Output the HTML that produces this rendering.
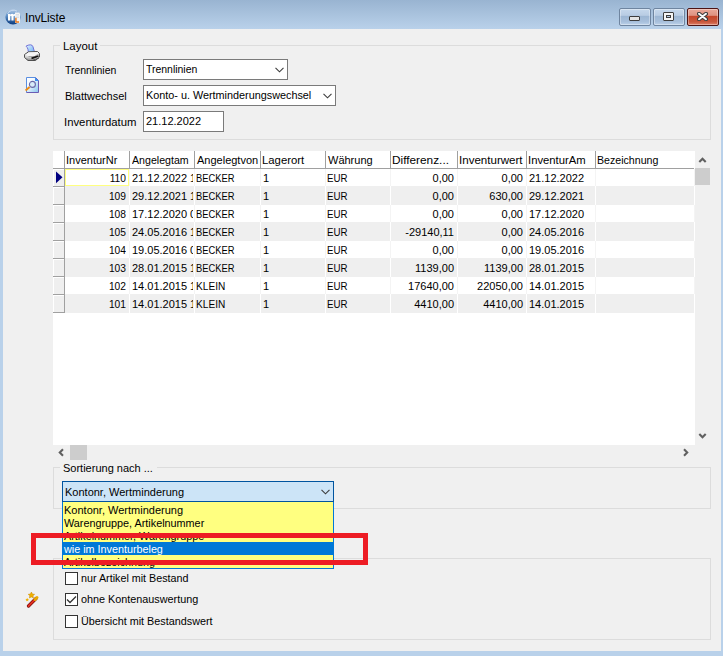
<!DOCTYPE html>
<html><head><meta charset="utf-8"><title>InvListe</title>
<style>
html,body{margin:0;padding:0;}
body{width:723px;height:656px;position:relative;overflow:hidden;background:#b9d1ea;font-family:'Liberation Sans',sans-serif;}
.r{position:absolute;}
.t{position:absolute;white-space:nowrap;font-size:11px;line-height:13px;color:#000;}
</style></head><body>
<div class="r" style="left:0;top:0;width:723px;height:29px;background:linear-gradient(#99b4d1,#b9d1ea);"></div>
<div class="r" style="left:0;top:29px;width:723px;height:627px;background:#b9d1ea;"></div>
<div class="r" style="left:3px;top:29px;width:718px;height:622px;background:#f0f0f0;"></div>
<svg class="r" style="left:5px;top:9px" width="16" height="16" viewBox="0 0 16 16">
<defs><linearGradient id="ag" x1="0" y1="0" x2="0" y2="1"><stop offset="0" stop-color="#b4cce8"/><stop offset="0.45" stop-color="#5a8cc4"/><stop offset="1" stop-color="#08397d"/></linearGradient></defs>
<circle cx="8" cy="8" r="7.6" fill="url(#ag)"/>
<path d="M2.5 5 A6.5 6.5 0 0 1 12 2.2" stroke="#d6e4f4" stroke-width="0.9" fill="none" opacity="0.8"/>
<path transform="translate(0,-0.8) scale(1,1.1)" d="M3 11.2V5.2h2.3v0.7C5.9 5.3 6.5 5 7.1 5c0.7 0 1.2 0.3 1.5 0.8C9.1 5.3 9.7 5 10.3 5 11.4 5 12 5.8 12 7v4.2H9.8V7.6c0-0.5-0.2-0.7-0.6-0.7S8.6 7.1 8.6 7.6v3.6H6.4V7.6c0-0.5-0.2-0.7-0.6-0.7S5.3 7.1 5.3 7.6v3.6z" fill="#fff"/>
<path d="M10 3.5h4l1 1v9.5h-5z" fill="#f4f4f4"/>
<path d="M10.8 5.5h3.2M10.8 7h3.2M10.8 8.5h3.2" stroke="#c8d0dc" stroke-width="0.6"/>
<path d="M10.9 8.8v4.2h3.2" stroke="#e8761a" stroke-width="1.4" fill="none"/>
</svg>
<div class="t" style="left:25px;top:12px;font-size:12px;color:#000;letter-spacing:-0.15px;">InvListe</div>
<div class="r" style="left:619px;top:8px;width:30px;height:16px;border:1px solid #6f85a0;border-radius:2px;background:linear-gradient(#c6d8ec 0%,#b8cce3 40%,#9cb6d3 44%,#a8c0dc 80%,#bdd2ea 100%);box-shadow:inset 0 0 0 1px rgba(255,255,255,0.35);"></div>
<div class="r" style="left:653px;top:8px;width:30px;height:16px;border:1px solid #6f85a0;border-radius:2px;background:linear-gradient(#c6d8ec 0%,#b8cce3 40%,#9cb6d3 44%,#a8c0dc 80%,#bdd2ea 100%);box-shadow:inset 0 0 0 1px rgba(255,255,255,0.35);"></div>
<div class="r" style="left:687px;top:8px;width:30px;height:16px;border:1px solid #4d1515;border-radius:2px;background:linear-gradient(#e9a899 0%,#de9281 40%,#c4452a 44%,#c8583d 80%,#df8068 100%);box-shadow:inset 0 0 0 1px rgba(255,255,255,0.35);"></div>
<div class="r" style="left:629px;top:16px;width:9px;height:3px;border:1px solid #3d3d3d;border-radius:1px;background:#e4e4e4;"></div>
<div class="r" style="left:663px;top:12px;width:9px;height:7px;border:1px solid #3d3d3d;border-radius:1px;background:#f4f4f4;"></div>
<div class="r" style="left:666px;top:15px;width:3px;height:1px;border:1px solid #3d3d3d;background:#b7cce3;"></div>
<svg class="r" style="left:697px;top:12px" width="11" height="9" viewBox="0 0 11 9">
<path d="M2 1.8 L9 7.2 M9 1.8 L2 7.2" stroke="#3b3b3b" stroke-width="4" stroke-linecap="round"/>
<path d="M2 1.8 L9 7.2 M9 1.8 L2 7.2" stroke="#fafafa" stroke-width="2" stroke-linecap="round"/>
</svg>
<svg class="r" style="left:23px;top:44px" width="18" height="18" viewBox="0 0 18 18">
<defs><linearGradient id="pg" x1="0" y1="0" x2="1" y2="1"><stop offset="0" stop-color="#e6f4ff"/><stop offset="1" stop-color="#5eaaf2"/></linearGradient>
<linearGradient id="bg1" x1="0" y1="0" x2="0" y2="1"><stop offset="0" stop-color="#ffffff"/><stop offset="0.6" stop-color="#d4d4d4"/><stop offset="1" stop-color="#8a8a8a"/></linearGradient></defs>
<path d="M3 2.2 Q5 0.8 7.5 0.8 Q9.5 1 10 2.8 L11.8 9 L5.5 9.5 L5 5.5 Q4.5 3.2 3 2.2z" fill="url(#pg)" stroke="#7272d8" stroke-width="1"/>
<path d="M1.5 10.5 L5.5 7.8 L14.5 7.5 L16.5 9.5 L16.5 13 L12.5 16.5 L5 16.5 L1.5 13.5z" fill="url(#bg1)" stroke="#505050" stroke-width="1"/>
<path d="M2.5 10.8 L6 8.6 L14 8.4 L15.5 9.6 L11.5 12 L5 12z" fill="#f4f4f4"/>
<path d="M5.5 12.5 L11.5 12.5 L15.8 10" stroke="#9a9a9a" stroke-width="0.8" fill="none"/>
<path d="M8.5 14.3 L15.5 12" stroke="#111" stroke-width="1.8"/>
<path d="M10 16.2 L16 14" stroke="#444" stroke-width="0.8"/>
</svg>
<svg class="r" style="left:24px;top:76px" width="16" height="17" viewBox="0 0 16 17">
<defs><linearGradient id="dg" x1="0" y1="0" x2="1" y2="1"><stop offset="0" stop-color="#ffffff"/><stop offset="0.35" stop-color="#f4faff"/><stop offset="1" stop-color="#86c4ee"/></linearGradient></defs>
<path d="M2.5 1.5h9l3 3v12h-12z" fill="url(#dg)"/>
<path d="M2.5 16.5V1.5h9" stroke="#5a8ee0" stroke-width="1" fill="none"/>
<path d="M11.5 1.5l3 3v12h-12" stroke="#6a5cb4" stroke-width="1" fill="none"/>
<path d="M11 1.2v3.8h3.8z" fill="#3a8ef0"/>
<circle cx="8.4" cy="8.4" r="3" fill="#d8ebf8" stroke="#6a68a8" stroke-width="1.1"/>
<path d="M1.6 14.6l4-3.6" stroke="#f08c12" stroke-width="2"/>
</svg>
<svg class="r" style="left:24px;top:590px" width="16" height="18" viewBox="0 0 16 18">
<path d="M7.4 2l1 2 2.2.3-1.6 1.5.4 2.2-2-1.1-2 1.1.4-2.2L4.2 4.3l2.2-.3z" fill="#f0b000" stroke="#c88a00" stroke-width="0.5"/>
<path d="M3.2 8l.6 1.1 1.2.2-.9.8.2 1.2-1.1-.6-1.1.6.2-1.2-.9-.8 1.2-.2z" fill="#f0b000"/>
<path d="M4.5 16 L12 8.5" stroke="#7a0a0a" stroke-width="3.2" stroke-linecap="round"/>
<path d="M4.5 16 L12 8.5" stroke="#e03020" stroke-width="1.8" stroke-linecap="round"/>
<path d="M11 9.5 L13 7.5" stroke="#e8a800" stroke-width="3" stroke-linecap="round"/>
</svg>
<div class="r" style="left:53px;top:45px;width:658px;height:95px;border:1px solid #dcdcdc;box-sizing:border-box;"></div>
<div class="r" style="left:60px;top:43px;width:40px;height:5px;background:#f0f0f0;"></div>
<div class="t" style="left:63px;top:40px;font-size:11px;color:#000;transform:scaleX(1.04);transform-origin:0 0;">Layout</div>
<div class="t" style="left:65px;top:64px;font-size:11px;color:#000;transform:scaleX(0.95);transform-origin:0 0;">Trennlinien</div>
<div class="t" style="left:65px;top:90px;font-size:11px;color:#000;">Blattwechsel</div>
<div class="t" style="left:64px;top:116px;font-size:11px;color:#000;transform:scaleX(1.03);transform-origin:0 0;">Inventurdatum</div>
<div class="r" style="left:143px;top:59px;width:145px;height:21px;border:1px solid #7a7a7a;background:#fff;box-sizing:border-box;"></div>
<div class="t" style="left:146px;top:63px;font-size:11px;color:#000;transform:scaleX(0.95);transform-origin:0 0;">Trennlinien</div>
<svg class="r" style="left:275px;top:67px" width="9" height="6" viewBox="0 0 9 6"><path d="M0.5 0.8 L4.5 4.8 L8.5 0.8" stroke="#3c3c3c" stroke-width="1.1" fill="none"/></svg>
<div class="r" style="left:143px;top:85px;width:193px;height:21px;border:1px solid #7a7a7a;background:#fff;box-sizing:border-box;"></div>
<div class="t" style="left:146px;top:89px;font-size:11px;color:#000;transform:scaleX(0.984);transform-origin:0 0;">Konto- u. Wertminderungswechsel</div>
<svg class="r" style="left:323px;top:93px" width="9" height="6" viewBox="0 0 9 6"><path d="M0.5 0.8 L4.5 4.8 L8.5 0.8" stroke="#3c3c3c" stroke-width="1.1" fill="none"/></svg>
<div class="r" style="left:143px;top:111px;width:81px;height:21px;border:1px solid #7a7a7a;background:#fff;box-sizing:border-box;"></div>
<div class="t" style="left:146px;top:115px;font-size:11px;color:#000;">21.12.2022</div>
<div class="r" style="left:53px;top:151px;width:642px;height:294px;background:#fff;"></div>
<div class="r" style="left:695px;top:151px;width:16px;height:309px;background:#f0f0f0;"></div>
<div class="r" style="left:53px;top:445px;width:658px;height:15px;background:#f0f0f0;"></div>
<div class="r" style="left:65px;top:186px;width:629px;height:1px;background:#efefef;"></div>
<div class="r" style="left:53px;top:169px;width:11px;height:17px;background:#efefef;border-left:1px solid #fff;border-top:1px solid #fff;box-sizing:border-box;"></div>
<div class="r" style="left:53px;top:186px;width:11px;height:1px;background:#a0a0a0;"></div>
<div class="r" style="left:65px;top:186px;width:629px;height:19px;background:#efefef;"></div>
<div class="r" style="left:53px;top:187px;width:11px;height:17px;background:#efefef;border-left:1px solid #fff;border-top:1px solid #fff;box-sizing:border-box;"></div>
<div class="r" style="left:53px;top:204px;width:11px;height:1px;background:#a0a0a0;"></div>
<div class="r" style="left:65px;top:222px;width:629px;height:1px;background:#efefef;"></div>
<div class="r" style="left:53px;top:205px;width:11px;height:17px;background:#efefef;border-left:1px solid #fff;border-top:1px solid #fff;box-sizing:border-box;"></div>
<div class="r" style="left:53px;top:222px;width:11px;height:1px;background:#a0a0a0;"></div>
<div class="r" style="left:65px;top:222px;width:629px;height:19px;background:#efefef;"></div>
<div class="r" style="left:53px;top:223px;width:11px;height:17px;background:#efefef;border-left:1px solid #fff;border-top:1px solid #fff;box-sizing:border-box;"></div>
<div class="r" style="left:53px;top:240px;width:11px;height:1px;background:#a0a0a0;"></div>
<div class="r" style="left:65px;top:258px;width:629px;height:1px;background:#efefef;"></div>
<div class="r" style="left:53px;top:241px;width:11px;height:17px;background:#efefef;border-left:1px solid #fff;border-top:1px solid #fff;box-sizing:border-box;"></div>
<div class="r" style="left:53px;top:258px;width:11px;height:1px;background:#a0a0a0;"></div>
<div class="r" style="left:65px;top:258px;width:629px;height:19px;background:#efefef;"></div>
<div class="r" style="left:53px;top:259px;width:11px;height:17px;background:#efefef;border-left:1px solid #fff;border-top:1px solid #fff;box-sizing:border-box;"></div>
<div class="r" style="left:53px;top:276px;width:11px;height:1px;background:#a0a0a0;"></div>
<div class="r" style="left:65px;top:294px;width:629px;height:1px;background:#efefef;"></div>
<div class="r" style="left:53px;top:277px;width:11px;height:17px;background:#efefef;border-left:1px solid #fff;border-top:1px solid #fff;box-sizing:border-box;"></div>
<div class="r" style="left:53px;top:294px;width:11px;height:1px;background:#a0a0a0;"></div>
<div class="r" style="left:65px;top:294px;width:629px;height:19px;background:#efefef;"></div>
<div class="r" style="left:53px;top:295px;width:11px;height:17px;background:#efefef;border-left:1px solid #fff;border-top:1px solid #fff;box-sizing:border-box;"></div>
<div class="r" style="left:53px;top:312px;width:11px;height:1px;background:#a0a0a0;"></div>
<div class="r" style="left:129px;top:169px;width:1px;height:17px;background:#f4f4f4;"></div>
<div class="r" style="left:194px;top:169px;width:1px;height:17px;background:#f4f4f4;"></div>
<div class="r" style="left:260px;top:169px;width:1px;height:17px;background:#f4f4f4;"></div>
<div class="r" style="left:325px;top:169px;width:1px;height:17px;background:#f4f4f4;"></div>
<div class="r" style="left:390px;top:169px;width:1px;height:17px;background:#f4f4f4;"></div>
<div class="r" style="left:457px;top:169px;width:1px;height:17px;background:#f4f4f4;"></div>
<div class="r" style="left:526px;top:169px;width:1px;height:17px;background:#f4f4f4;"></div>
<div class="r" style="left:595px;top:169px;width:1px;height:17px;background:#f4f4f4;"></div>
<div class="r" style="left:694px;top:169px;width:1px;height:17px;background:#f4f4f4;"></div>
<div class="r" style="left:129px;top:186px;width:1px;height:19px;background:#ffffff;"></div>
<div class="r" style="left:194px;top:186px;width:1px;height:19px;background:#ffffff;"></div>
<div class="r" style="left:260px;top:186px;width:1px;height:19px;background:#ffffff;"></div>
<div class="r" style="left:325px;top:186px;width:1px;height:19px;background:#ffffff;"></div>
<div class="r" style="left:390px;top:186px;width:1px;height:19px;background:#ffffff;"></div>
<div class="r" style="left:457px;top:186px;width:1px;height:19px;background:#ffffff;"></div>
<div class="r" style="left:526px;top:186px;width:1px;height:19px;background:#ffffff;"></div>
<div class="r" style="left:595px;top:186px;width:1px;height:19px;background:#ffffff;"></div>
<div class="r" style="left:694px;top:186px;width:1px;height:19px;background:#ffffff;"></div>
<div class="r" style="left:129px;top:205px;width:1px;height:17px;background:#f4f4f4;"></div>
<div class="r" style="left:194px;top:205px;width:1px;height:17px;background:#f4f4f4;"></div>
<div class="r" style="left:260px;top:205px;width:1px;height:17px;background:#f4f4f4;"></div>
<div class="r" style="left:325px;top:205px;width:1px;height:17px;background:#f4f4f4;"></div>
<div class="r" style="left:390px;top:205px;width:1px;height:17px;background:#f4f4f4;"></div>
<div class="r" style="left:457px;top:205px;width:1px;height:17px;background:#f4f4f4;"></div>
<div class="r" style="left:526px;top:205px;width:1px;height:17px;background:#f4f4f4;"></div>
<div class="r" style="left:595px;top:205px;width:1px;height:17px;background:#f4f4f4;"></div>
<div class="r" style="left:694px;top:205px;width:1px;height:17px;background:#f4f4f4;"></div>
<div class="r" style="left:129px;top:222px;width:1px;height:19px;background:#ffffff;"></div>
<div class="r" style="left:194px;top:222px;width:1px;height:19px;background:#ffffff;"></div>
<div class="r" style="left:260px;top:222px;width:1px;height:19px;background:#ffffff;"></div>
<div class="r" style="left:325px;top:222px;width:1px;height:19px;background:#ffffff;"></div>
<div class="r" style="left:390px;top:222px;width:1px;height:19px;background:#ffffff;"></div>
<div class="r" style="left:457px;top:222px;width:1px;height:19px;background:#ffffff;"></div>
<div class="r" style="left:526px;top:222px;width:1px;height:19px;background:#ffffff;"></div>
<div class="r" style="left:595px;top:222px;width:1px;height:19px;background:#ffffff;"></div>
<div class="r" style="left:694px;top:222px;width:1px;height:19px;background:#ffffff;"></div>
<div class="r" style="left:129px;top:241px;width:1px;height:17px;background:#f4f4f4;"></div>
<div class="r" style="left:194px;top:241px;width:1px;height:17px;background:#f4f4f4;"></div>
<div class="r" style="left:260px;top:241px;width:1px;height:17px;background:#f4f4f4;"></div>
<div class="r" style="left:325px;top:241px;width:1px;height:17px;background:#f4f4f4;"></div>
<div class="r" style="left:390px;top:241px;width:1px;height:17px;background:#f4f4f4;"></div>
<div class="r" style="left:457px;top:241px;width:1px;height:17px;background:#f4f4f4;"></div>
<div class="r" style="left:526px;top:241px;width:1px;height:17px;background:#f4f4f4;"></div>
<div class="r" style="left:595px;top:241px;width:1px;height:17px;background:#f4f4f4;"></div>
<div class="r" style="left:694px;top:241px;width:1px;height:17px;background:#f4f4f4;"></div>
<div class="r" style="left:129px;top:258px;width:1px;height:19px;background:#ffffff;"></div>
<div class="r" style="left:194px;top:258px;width:1px;height:19px;background:#ffffff;"></div>
<div class="r" style="left:260px;top:258px;width:1px;height:19px;background:#ffffff;"></div>
<div class="r" style="left:325px;top:258px;width:1px;height:19px;background:#ffffff;"></div>
<div class="r" style="left:390px;top:258px;width:1px;height:19px;background:#ffffff;"></div>
<div class="r" style="left:457px;top:258px;width:1px;height:19px;background:#ffffff;"></div>
<div class="r" style="left:526px;top:258px;width:1px;height:19px;background:#ffffff;"></div>
<div class="r" style="left:595px;top:258px;width:1px;height:19px;background:#ffffff;"></div>
<div class="r" style="left:694px;top:258px;width:1px;height:19px;background:#ffffff;"></div>
<div class="r" style="left:129px;top:277px;width:1px;height:17px;background:#f4f4f4;"></div>
<div class="r" style="left:194px;top:277px;width:1px;height:17px;background:#f4f4f4;"></div>
<div class="r" style="left:260px;top:277px;width:1px;height:17px;background:#f4f4f4;"></div>
<div class="r" style="left:325px;top:277px;width:1px;height:17px;background:#f4f4f4;"></div>
<div class="r" style="left:390px;top:277px;width:1px;height:17px;background:#f4f4f4;"></div>
<div class="r" style="left:457px;top:277px;width:1px;height:17px;background:#f4f4f4;"></div>
<div class="r" style="left:526px;top:277px;width:1px;height:17px;background:#f4f4f4;"></div>
<div class="r" style="left:595px;top:277px;width:1px;height:17px;background:#f4f4f4;"></div>
<div class="r" style="left:694px;top:277px;width:1px;height:17px;background:#f4f4f4;"></div>
<div class="r" style="left:129px;top:294px;width:1px;height:19px;background:#ffffff;"></div>
<div class="r" style="left:194px;top:294px;width:1px;height:19px;background:#ffffff;"></div>
<div class="r" style="left:260px;top:294px;width:1px;height:19px;background:#ffffff;"></div>
<div class="r" style="left:325px;top:294px;width:1px;height:19px;background:#ffffff;"></div>
<div class="r" style="left:390px;top:294px;width:1px;height:19px;background:#ffffff;"></div>
<div class="r" style="left:457px;top:294px;width:1px;height:19px;background:#ffffff;"></div>
<div class="r" style="left:526px;top:294px;width:1px;height:19px;background:#ffffff;"></div>
<div class="r" style="left:595px;top:294px;width:1px;height:19px;background:#ffffff;"></div>
<div class="r" style="left:694px;top:294px;width:1px;height:19px;background:#ffffff;"></div>
<div class="r" style="left:53px;top:168px;width:641px;height:1px;background:#a0a0a0;"></div>
<div class="r" style="left:64px;top:151px;width:1px;height:162px;background:#a0a0a0;"></div>
<div class="r" style="left:129px;top:151px;width:1px;height:17px;background:#a0a0a0;"></div>
<div class="r" style="left:194px;top:151px;width:1px;height:17px;background:#a0a0a0;"></div>
<div class="r" style="left:260px;top:151px;width:1px;height:17px;background:#a0a0a0;"></div>
<div class="r" style="left:325px;top:151px;width:1px;height:17px;background:#a0a0a0;"></div>
<div class="r" style="left:390px;top:151px;width:1px;height:17px;background:#a0a0a0;"></div>
<div class="r" style="left:457px;top:151px;width:1px;height:17px;background:#a0a0a0;"></div>
<div class="r" style="left:526px;top:151px;width:1px;height:17px;background:#a0a0a0;"></div>
<div class="r" style="left:595px;top:151px;width:1px;height:17px;background:#a0a0a0;"></div>
<div class="t" style="left:66px;top:154px;font-size:11px;color:#000;">InventurNr</div>
<div class="t" style="left:132px;top:154px;font-size:11px;color:#000;transform:scaleX(0.965);transform-origin:0 0;">Angelegtam</div>
<div class="t" style="left:197px;top:154px;font-size:11px;color:#000;">Angelegtvon</div>
<div class="t" style="left:262px;top:154px;font-size:11px;color:#000;transform:scaleX(1.03);transform-origin:0 0;">Lagerort</div>
<div class="t" style="left:328px;top:154px;font-size:11px;color:#000;">Währung</div>
<div class="t" style="left:392px;top:154px;font-size:11px;color:#000;transform:scaleX(1.075);transform-origin:0 0;">Differenz...</div>
<div class="t" style="left:459px;top:154px;font-size:11px;color:#000;transform:scaleX(1.05);transform-origin:0 0;">Inventurwert</div>
<div class="t" style="left:528px;top:154px;font-size:11px;color:#000;transform:scaleX(1.025);transform-origin:0 0;">InventurAm</div>
<div class="t" style="left:597px;top:154px;font-size:11px;color:#000;transform:scaleX(0.965);transform-origin:0 0;">Bezeichnung</div>
<div class="t" style="left:65px;top:172px;width:61px;text-align:right;transform:scaleX(0.93);transform-origin:100% 0;">110</div>
<div class="t" style="left:132px;top:172px;width:61px;overflow:hidden;">21.12.2022 1</div>
<div class="t" style="left:196px;top:172px;font-size:11px;color:#000;transform:scaleX(0.85);transform-origin:0 0;">BECKER</div>
<div class="t" style="left:263px;top:172px;font-size:11px;color:#000;">1</div>
<div class="t" style="left:327px;top:172px;font-size:11px;color:#000;transform:scaleX(0.88);transform-origin:0 0;">EUR</div>
<div class="t" style="left:391px;top:172px;width:63px;text-align:right;">0,00</div>
<div class="t" style="left:458px;top:172px;width:65px;text-align:right;">0,00</div>
<div class="t" style="left:529px;top:172px;font-size:11px;color:#000;">21.12.2022</div>
<div class="t" style="left:65px;top:190px;width:61px;text-align:right;transform:scaleX(0.93);transform-origin:100% 0;">109</div>
<div class="t" style="left:132px;top:190px;width:61px;overflow:hidden;">29.12.2021 1</div>
<div class="t" style="left:196px;top:190px;font-size:11px;color:#000;transform:scaleX(0.85);transform-origin:0 0;">BECKER</div>
<div class="t" style="left:263px;top:190px;font-size:11px;color:#000;">1</div>
<div class="t" style="left:327px;top:190px;font-size:11px;color:#000;transform:scaleX(0.88);transform-origin:0 0;">EUR</div>
<div class="t" style="left:391px;top:190px;width:63px;text-align:right;">0,00</div>
<div class="t" style="left:458px;top:190px;width:65px;text-align:right;">630,00</div>
<div class="t" style="left:529px;top:190px;font-size:11px;color:#000;">29.12.2021</div>
<div class="t" style="left:65px;top:208px;width:61px;text-align:right;transform:scaleX(0.93);transform-origin:100% 0;">108</div>
<div class="t" style="left:132px;top:208px;width:61px;overflow:hidden;">17.12.2020 0</div>
<div class="t" style="left:196px;top:208px;font-size:11px;color:#000;transform:scaleX(0.85);transform-origin:0 0;">BECKER</div>
<div class="t" style="left:263px;top:208px;font-size:11px;color:#000;">1</div>
<div class="t" style="left:327px;top:208px;font-size:11px;color:#000;transform:scaleX(0.88);transform-origin:0 0;">EUR</div>
<div class="t" style="left:391px;top:208px;width:63px;text-align:right;">0,00</div>
<div class="t" style="left:458px;top:208px;width:65px;text-align:right;">0,00</div>
<div class="t" style="left:529px;top:208px;font-size:11px;color:#000;">17.12.2020</div>
<div class="t" style="left:65px;top:226px;width:61px;text-align:right;transform:scaleX(0.93);transform-origin:100% 0;">105</div>
<div class="t" style="left:132px;top:226px;width:61px;overflow:hidden;">24.05.2016 1</div>
<div class="t" style="left:196px;top:226px;font-size:11px;color:#000;transform:scaleX(0.85);transform-origin:0 0;">BECKER</div>
<div class="t" style="left:263px;top:226px;font-size:11px;color:#000;">1</div>
<div class="t" style="left:327px;top:226px;font-size:11px;color:#000;transform:scaleX(0.88);transform-origin:0 0;">EUR</div>
<div class="t" style="left:391px;top:226px;width:63px;text-align:right;">-29140,11</div>
<div class="t" style="left:458px;top:226px;width:65px;text-align:right;">0,00</div>
<div class="t" style="left:529px;top:226px;font-size:11px;color:#000;">24.05.2016</div>
<div class="t" style="left:65px;top:244px;width:61px;text-align:right;transform:scaleX(0.93);transform-origin:100% 0;">104</div>
<div class="t" style="left:132px;top:244px;width:61px;overflow:hidden;">19.05.2016 0</div>
<div class="t" style="left:196px;top:244px;font-size:11px;color:#000;transform:scaleX(0.85);transform-origin:0 0;">BECKER</div>
<div class="t" style="left:263px;top:244px;font-size:11px;color:#000;">1</div>
<div class="t" style="left:327px;top:244px;font-size:11px;color:#000;transform:scaleX(0.88);transform-origin:0 0;">EUR</div>
<div class="t" style="left:391px;top:244px;width:63px;text-align:right;">0,00</div>
<div class="t" style="left:458px;top:244px;width:65px;text-align:right;">0,00</div>
<div class="t" style="left:529px;top:244px;font-size:11px;color:#000;">19.05.2016</div>
<div class="t" style="left:65px;top:262px;width:61px;text-align:right;transform:scaleX(0.93);transform-origin:100% 0;">103</div>
<div class="t" style="left:132px;top:262px;width:61px;overflow:hidden;">28.01.2015 1</div>
<div class="t" style="left:196px;top:262px;font-size:11px;color:#000;transform:scaleX(0.85);transform-origin:0 0;">BECKER</div>
<div class="t" style="left:263px;top:262px;font-size:11px;color:#000;">1</div>
<div class="t" style="left:327px;top:262px;font-size:11px;color:#000;transform:scaleX(0.88);transform-origin:0 0;">EUR</div>
<div class="t" style="left:391px;top:262px;width:63px;text-align:right;">1139,00</div>
<div class="t" style="left:458px;top:262px;width:65px;text-align:right;">1139,00</div>
<div class="t" style="left:529px;top:262px;font-size:11px;color:#000;">28.01.2015</div>
<div class="t" style="left:65px;top:280px;width:61px;text-align:right;transform:scaleX(0.93);transform-origin:100% 0;">102</div>
<div class="t" style="left:132px;top:280px;width:61px;overflow:hidden;">14.01.2015 1</div>
<div class="t" style="left:196px;top:280px;font-size:11px;color:#000;transform:scaleX(0.92);transform-origin:0 0;">KLEIN</div>
<div class="t" style="left:263px;top:280px;font-size:11px;color:#000;">1</div>
<div class="t" style="left:327px;top:280px;font-size:11px;color:#000;transform:scaleX(0.88);transform-origin:0 0;">EUR</div>
<div class="t" style="left:391px;top:280px;width:63px;text-align:right;">17640,00</div>
<div class="t" style="left:458px;top:280px;width:65px;text-align:right;">22050,00</div>
<div class="t" style="left:529px;top:280px;font-size:11px;color:#000;">14.01.2015</div>
<div class="t" style="left:65px;top:298px;width:61px;text-align:right;transform:scaleX(0.93);transform-origin:100% 0;">101</div>
<div class="t" style="left:132px;top:298px;width:61px;overflow:hidden;">14.01.2015 1</div>
<div class="t" style="left:196px;top:298px;font-size:11px;color:#000;transform:scaleX(0.92);transform-origin:0 0;">KLEIN</div>
<div class="t" style="left:263px;top:298px;font-size:11px;color:#000;">1</div>
<div class="t" style="left:327px;top:298px;font-size:11px;color:#000;transform:scaleX(0.88);transform-origin:0 0;">EUR</div>
<div class="t" style="left:391px;top:298px;width:63px;text-align:right;">4410,00</div>
<div class="t" style="left:458px;top:298px;width:65px;text-align:right;">4410,00</div>
<div class="t" style="left:529px;top:298px;font-size:11px;color:#000;">14.01.2015</div>
<div class="r" style="left:65px;top:169px;width:64px;height:17px;border:1px solid #ffff80;box-sizing:border-box;"></div>
<svg class="r" style="left:56px;top:171px" width="7" height="13" viewBox="0 0 7 13"><path d="M0 0.5 L6.5 6.3 L0 12.2z" fill="#000080"/></svg>
<div class="r" style="left:695px;top:168px;width:15px;height:17px;background:#cdcdcd;"></div>
<div class="r" style="left:70px;top:445px;width:17px;height:15px;background:#cdcdcd;"></div>
<svg class="r" style="left:698px;top:156px" width="9" height="8" viewBox="0 0 9 8"><path d="M1.3 6 L4.5 2.8 L7.7 6" stroke="#606060" stroke-width="2.1" fill="none"/></svg>
<svg class="r" style="left:698px;top:432px" width="9" height="8" viewBox="0 0 9 8"><path d="M1.3 2 L4.5 5.2 L7.7 2" stroke="#606060" stroke-width="2.1" fill="none"/></svg>
<svg class="r" style="left:57px;top:448px" width="8" height="9" viewBox="0 0 8 9"><path d="M6 1.3 L2.8 4.5 L6 7.7" stroke="#606060" stroke-width="2.1" fill="none"/></svg>
<svg class="r" style="left:682px;top:448px" width="8" height="9" viewBox="0 0 8 9"><path d="M2 1.3 L5.2 4.5 L2 7.7" stroke="#606060" stroke-width="2.1" fill="none"/></svg>
<div class="r" style="left:53px;top:467px;width:658px;height:42px;border:1px solid #dcdcdc;box-sizing:border-box;"></div>
<div class="r" style="left:60px;top:465px;width:97px;height:5px;background:#f0f0f0;"></div>
<div class="t" style="left:63px;top:462px;font-size:11px;color:#000;">Sortierung nach ...</div>
<div class="r" style="left:53px;top:558px;width:658px;height:82px;border:1px solid #dcdcdc;box-sizing:border-box;"></div>
<div class="r" style="left:62px;top:481px;width:272px;height:21px;border:1px solid #00549f;background:#cce4f7;box-sizing:border-box;"></div>
<div class="t" style="left:65px;top:486px;font-size:11px;color:#000;">Kontonr, Wertminderung</div>
<svg class="r" style="left:321px;top:489px" width="9" height="6" viewBox="0 0 9 6"><path d="M0.5 0.8 L4.5 4.8 L8.5 0.8" stroke="#3c3c3c" stroke-width="1.1" fill="none"/></svg>
<div class="r" style="left:62px;top:502px;width:272px;height:67px;border:1px solid #0078d7;border-top:none;background:#ffff80;box-sizing:border-box;"></div>
<div class="t" style="left:64px;top:504px;font-size:11px;color:#000;">Kontonr, Wertminderung</div>
<div class="t" style="left:64px;top:517px;font-size:11px;color:#000;transform:scaleX(0.983);transform-origin:0 0;">Warengruppe, Artikelnummer</div>
<div class="t" style="left:64px;top:530px;font-size:11px;color:#000;transform:scaleX(0.983);transform-origin:0 0;">Artikelnummer, Warengruppe</div>
<div class="r" style="left:63px;top:542px;width:270px;height:13px;background:#0078d7;"></div>
<div class="t" style="left:64px;top:543px;font-size:11px;color:#fff;transform:scaleX(0.98);transform-origin:0 0;">wie im Inventurbeleg</div>
<div class="t" style="left:64px;top:556px;font-size:11px;color:#000;transform:scaleX(0.98);transform-origin:0 0;">Artikelbezeichnung</div>
<div class="r" style="left:31px;top:533px;width:337px;height:32px;border:5px solid #ed1c24;box-sizing:border-box;"></div>
<div class="r" style="left:65px;top:572px;width:13px;height:13px;border:1px solid #333;background:#fff;box-sizing:border-box;"></div>
<div class="t" style="left:81px;top:572px;font-size:11px;color:#000;transform:scaleX(0.977);transform-origin:0 0;">nur Artikel mit Bestand</div>
<div class="r" style="left:65px;top:593px;width:13px;height:13px;border:1px solid #333;background:#fff;box-sizing:border-box;"></div>
<svg class="r" style="left:66px;top:594px" width="11" height="11" viewBox="0 0 11 11"><path d="M1 5.5 L4 8.5 L10 2.5" stroke="#333" stroke-width="1.3" fill="none"/></svg>
<div class="t" style="left:81px;top:593px;font-size:11px;color:#000;transform:scaleX(0.983);transform-origin:0 0;">ohne Kontenauswertung</div>
<div class="r" style="left:65px;top:615px;width:13px;height:13px;border:1px solid #333;background:#fff;box-sizing:border-box;"></div>
<div class="t" style="left:81px;top:615px;font-size:11px;color:#000;transform:scaleX(0.983);transform-origin:0 0;">Übersicht mit Bestandswert</div>
</body></html>
